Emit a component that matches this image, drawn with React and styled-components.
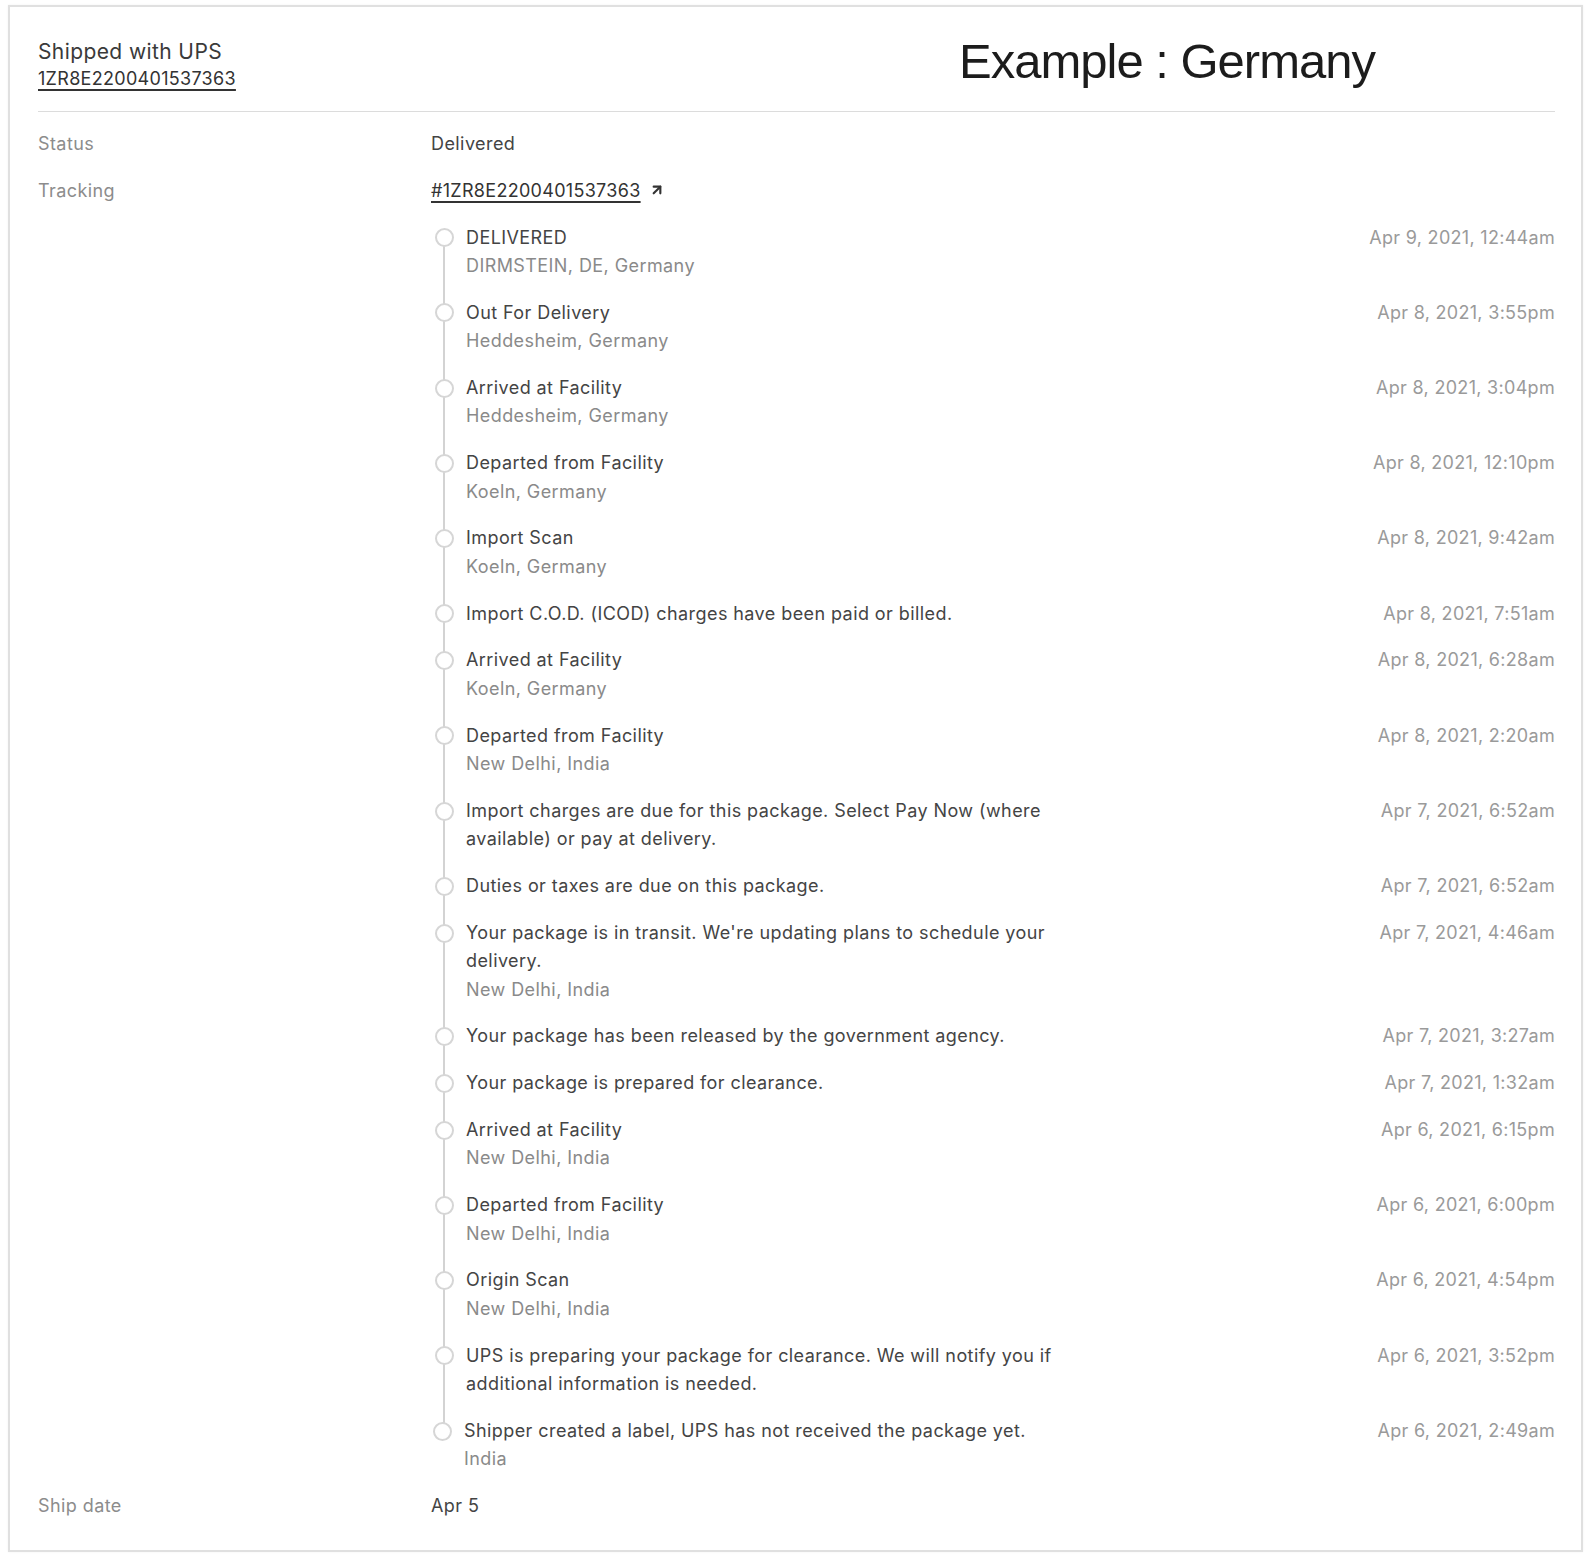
import React from "react";
import styled, { createGlobalStyle } from "styled-components";
import { ArrowUpRight } from "lucide-react";

const GlobalStyle = createGlobalStyle`
  html, body {
    margin: 0;
    background: #ffffff;
  }
  body {
    font-family: Inter, "Noto Sans", Arial, sans-serif;
    color: #444;
    -webkit-font-smoothing: antialiased;
  }
  ol, ul { margin: 0; padding: 0; list-style: none; }
`;

const Page = styled.div`
  padding: 5px 5px 10px 8px;
`;

const Card = styled.section`
  box-sizing: border-box;
  width: 1575px;
  height: 1547px;
  border: 2px solid #e0e0e0;
  box-shadow: 0 0 2px rgba(0, 0, 0, 0.06);
  padding: 30.5px 26px 0 28px;
`;

const Header = styled.header`
  display: flex;
  justify-content: space-between;
  align-items: flex-start;
  padding-bottom: 19px;
  border-bottom: 1px solid #dcdcdc;
`;

const Carrier = styled.div`
  display: flex;
  flex-direction: column;
`;

const CarrierName = styled.span`
  font-size: 21px;
  line-height: 27px;
  letter-spacing: 0.4px;
  color: #3a3a3a;
`;

const Underlined = styled.a`
  color: #333;
  font-size: 18px;
  line-height: 27px;
  letter-spacing: 0.3px;
  text-decoration: underline;
  text-decoration-thickness: 2px;
  text-underline-offset: 4px;
`;

const Annotation = styled.h1`
  margin: -5px 180px 0 0;
  font-family: "Liberation Sans", Arial, sans-serif;
  font-weight: 400;
  font-size: 49px;
  line-height: 56px;
  letter-spacing: -1px;
  color: #1c1c1c;
`;

const Details = styled.dl`
  margin: 0;
  padding-top: 18.5px;
  display: grid;
  grid-template-columns: 393px 1fr;
  row-gap: 18.4px;
  font-size: 18px;
  line-height: 28.4px;
  letter-spacing: 0.42px;
`;

const Label = styled.dt`
  color: #8c8c8c;
`;

const Value = styled.dd`
  margin: 0;
  grid-column: ${(p) => (p.$wide ? "2" : "auto")};
  color: #444;
`;

const TrackLink = styled.span`
  display: inline-flex;
  align-items: center;
  gap: 8px;
  svg { color: #333; }
`;

const Timeline = styled.ol`
  display: flex;
  flex-direction: column;
`;

const Event = styled.li`
  position: relative;
  display: grid;
  grid-template-columns: minmax(0, 596px) 1fr;
  padding: 0 0 ${(p) => (p.$last ? 0 : 18.4)}px 35px;
  margin-left: ${(p) => (p.$last ? -2 : 0)}px;

  &::before {
    content: "";
    display: ${(p) => (p.$last ? "none" : "block")};
    position: absolute;
    left: 12px;
    top: 14px;
    bottom: -14px;
    width: 2px;
    background: #d3d3d3;
  }
`;

const Marker = styled.span`
  position: absolute;
  left: 3.5px;
  top: 4.7px;
  box-sizing: border-box;
  width: 19px;
  height: 19px;
  border-radius: 50%;
  border: 2px solid #d6d6d6;
  background: #fff;
  z-index: 1;
`;

const EventText = styled.div`
  display: flex;
  flex-direction: column;
`;

const EventTitle = styled.span`
  color: #444;
`;

const EventPlace = styled.span`
  color: #8a8a8a;
`;

const EventTime = styled.time`
  justify-self: end;
  white-space: nowrap;
  letter-spacing: 0.3px;
  color: #9a9a9a;
`;

const events = [
  ["DELIVERED", "DIRMSTEIN, DE, Germany", "Apr 9, 2021, 12:44am"],
  ["Out For Delivery", "Heddesheim, Germany", "Apr 8, 2021, 3:55pm"],
  ["Arrived at Facility", "Heddesheim, Germany", "Apr 8, 2021, 3:04pm"],
  ["Departed from Facility", "Koeln, Germany", "Apr 8, 2021, 12:10pm"],
  ["Import Scan", "Koeln, Germany", "Apr 8, 2021, 9:42am"],
  ["Import C.O.D. (ICOD) charges have been paid or billed.", null, "Apr 8, 2021, 7:51am"],
  ["Arrived at Facility", "Koeln, Germany", "Apr 8, 2021, 6:28am"],
  ["Departed from Facility", "New Delhi, India", "Apr 8, 2021, 2:20am"],
  [
    "Import charges are due for this package. Select Pay Now (where available) or pay at delivery.",
    null,
    "Apr 7, 2021, 6:52am",
  ],
  ["Duties or taxes are due on this package.", null, "Apr 7, 2021, 6:52am"],
  [
    "Your package is in transit. We're updating plans to schedule your delivery.",
    "New Delhi, India",
    "Apr 7, 2021, 4:46am",
  ],
  ["Your package has been released by the government agency.", null, "Apr 7, 2021, 3:27am"],
  ["Your package is prepared for clearance.", null, "Apr 7, 2021, 1:32am"],
  ["Arrived at Facility", "New Delhi, India", "Apr 6, 2021, 6:15pm"],
  ["Departed from Facility", "New Delhi, India", "Apr 6, 2021, 6:00pm"],
  ["Origin Scan", "New Delhi, India", "Apr 6, 2021, 4:54pm"],
  [
    "UPS is preparing your package for clearance. We will notify you if additional information is needed.",
    null,
    "Apr 6, 2021, 3:52pm",
  ],
  ["Shipper created a label, UPS has not received the package yet.", "India", "Apr 6, 2021, 2:49am"],
];

export default function App() {
  return (
    <Page>
      <GlobalStyle />
      <Card>
        <Header>
          <Carrier>
            <CarrierName>Shipped with UPS</CarrierName>
            <div>
              <Underlined>1ZR8E2200401537363</Underlined>
            </div>
          </Carrier>
          <Annotation>Example : Germany</Annotation>
        </Header>
        <Details>
          <Label>Status</Label>
          <Value>Delivered</Value>
          <Label>Tracking</Label>
          <Value>
            <TrackLink>
              <Underlined>#1ZR8E2200401537363</Underlined>
              <ArrowUpRight size={16} strokeWidth={3.2} />
            </TrackLink>
          </Value>
          <Value $wide>
            <Timeline>
              {events.map(([title, place, time], i) => {
                const last = i === events.length - 1;
                return (
                  <Event key={i} $last={last}>
                    <Marker />
                    <EventText>
                      <EventTitle>{title}</EventTitle>
                      {place && <EventPlace>{place}</EventPlace>}
                    </EventText>
                    <EventTime>{time}</EventTime>
                  </Event>
                );
              })}
            </Timeline>
          </Value>
          <Label>Ship date</Label>
          <Value>Apr 5</Value>
        </Details>
      </Card>
    </Page>
  );
}
